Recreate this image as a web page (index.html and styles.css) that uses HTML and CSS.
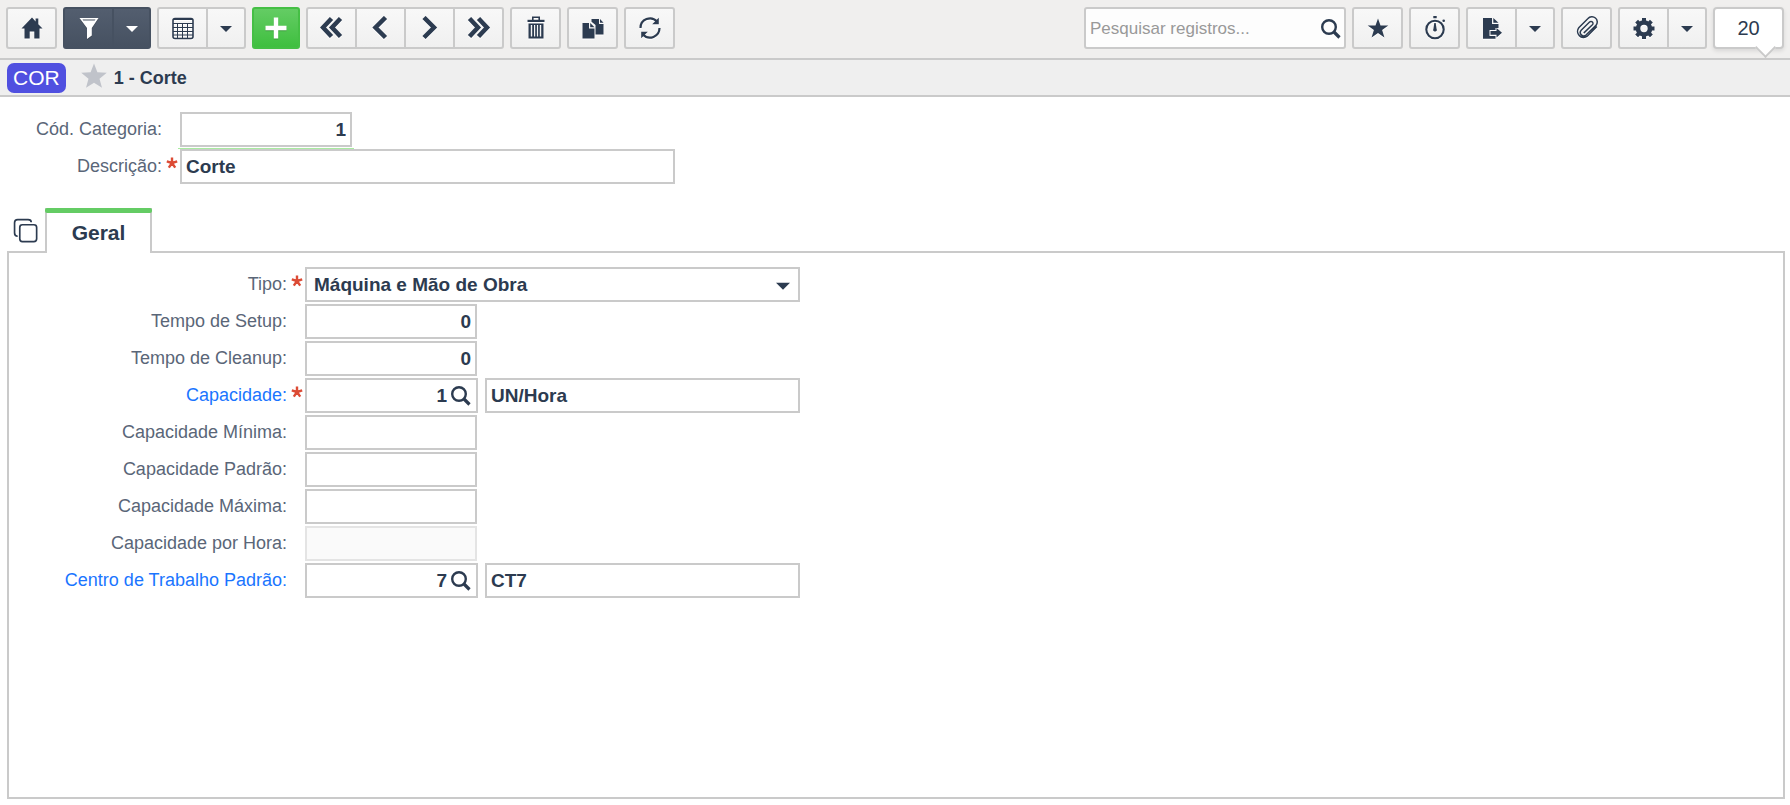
FILE: index.html
```
<!DOCTYPE html>
<html lang="pt-BR">
<head>
    <meta charset="UTF-8">
    <meta name="viewport" content="width=device-width, initial-scale=1.0">
    <title>1 - Corte</title>
    <link rel="stylesheet" href="styles.css">
</head>
<body>
    <!-- Shared icons -->
    <svg class="symbols" aria-hidden="true">
        <symbol id="caret" viewBox="0 0 12 12"><path d="M0 4H12L6 10Z"/></symbol>
        <symbol id="search" viewBox="0 0 20 20">
            <circle cx="8" cy="8" r="6.8" fill="none" stroke="currentColor" stroke-width="2.4"/>
            <path d="M12.5 12.5L18.5 18.5" stroke="currentColor" stroke-width="3.2"/>
        </symbol>
        <symbol id="asterisk" viewBox="0 0 12 12">
            <path d="M6 6V0.5M6 6L0.8 4.3M6 6L2.8 10.6M6 6L9.2 10.6M6 6L11.2 4.3" stroke="currentColor" stroke-width="2.4"/>
        </symbol>
    </svg>

    <header class="toolbar">
        <button class="btn" aria-label="Início">
            <svg class="icon" viewBox="0 0 24 24"><path d="M12 1.5L1.5 12.5H4.5V22.5H9.7V15.5H14.3V22.5H19.5V12.5H22.5L18.3 8.2V2.5H15.6V5.4Z"/></svg>
        </button>

        <div class="btn-group dark">
            <button class="btn" aria-label="Filtrar">
                <svg class="icon" viewBox="0 0 24 24"><path fill-rule="evenodd" d="M2.5 2H21.5L14.8 12V19.5L10 23V12ZM5.5 3.4L6.3 4.5H17.7L18.5 3.4Z"/></svg>
            </button>
            <button class="btn drop" aria-label="Opções de filtro"><svg class="caret"><use href="#caret"/></svg></button>
        </div>

        <div class="btn-group">
            <button class="btn" aria-label="Grade">
                <svg class="icon" viewBox="0 0 24 24">
                    <rect x="2" y="2.5" width="20" height="20" rx="2" fill="none" stroke="currentColor" stroke-width="1.6"/>
                    <path d="M2 3.5H22M2 7.5H22M2 11.5H22M2 15.5H22M2 19H22M6.5 7.5V22M11.5 7.5V22M16.5 7.5V22" stroke="currentColor" stroke-width="1"/>
                </svg>
            </button>
            <button class="btn drop" aria-label="Opções da grade"><svg class="caret"><use href="#caret"/></svg></button>
        </div>

        <button class="btn add" aria-label="Novo">
            <svg class="icon" viewBox="0 0 24 24"><path d="M9.8 1.5H14.2V9.8H22.5V14.2H14.2V22.5H9.8V14.2H1.5V9.8H9.8Z"/></svg>
        </button>

        <div class="btn-group">
            <button class="btn" aria-label="Primeiro">
                <svg class="icon stroke" viewBox="0 0 24 24"><path d="M11.5 2.5L3 11.5L11.5 20.5M20.5 2.5L12 11.5L20.5 20.5"/></svg>
            </button>
            <button class="btn" aria-label="Anterior">
                <svg class="icon stroke" viewBox="0 0 24 24"><path d="M16.5 1.5L6.5 11.5L16.5 21.5"/></svg>
            </button>
            <button class="btn" aria-label="Próximo">
                <svg class="icon stroke" viewBox="0 0 24 24"><path d="M6 1.5L16 11.5L6 21.5"/></svg>
            </button>
            <button class="btn" aria-label="Último">
                <svg class="icon stroke" viewBox="0 0 24 24"><path d="M2.5 2.5L11 11.5L2.5 20.5M11.5 2.5L20 11.5L11.5 20.5"/></svg>
            </button>
        </div>

        <button class="btn" aria-label="Excluir">
            <svg class="icon" viewBox="0 0 24 24">
                <path d="M8.8 4V1.2H15.2V4" fill="none" stroke="currentColor" stroke-width="1.6"/>
                <path d="M3.5 3.8H20.5V6H3.5Z"/>
                <path fill-rule="evenodd" d="M4.5 7.5H19.5V22.5H4.5ZM6.8 9V20.5H8.2V9ZM10 9V20.5H11.2V9ZM12.9 9V20.5H14.1V9ZM15.8 9V20.5H17.2V9Z"/>
            </svg>
        </button>

        <button class="btn" aria-label="Duplicar">
            <svg class="icon" viewBox="0 0 24 24">
                <path d="M10.5 3H18V8H22.5V18.5H14.5V9L10.5 5.8ZM19 3L22.5 6.8H19Z"/>
                <path d="M1.5 7H8V12.5H13.5V22.5H1.5ZM9.2 7L13.5 11.2H9.2Z"/>
            </svg>
        </button>

        <button class="btn" aria-label="Atualizar">
            <svg class="icon" viewBox="0 0 24 24">
                <path d="M2.5 12A9.5 9.5 0 0 1 19 5.5M21.5 12A9.5 9.5 0 0 1 5 18.5" fill="none" stroke="currentColor" stroke-width="2.2"/>
                <path d="M20.8 1.8V8.2H14.2ZM3.2 22.2V15.8H9.8Z"/>
            </svg>
        </button>

        <form class="search-box" role="search">
            <input type="text" placeholder="Pesquisar registros..." aria-label="Pesquisar registros">
            <button type="button" aria-label="Pesquisar"><svg class="lens"><use href="#search"/></svg></button>
        </form>

        <button class="btn" aria-label="Favoritos">
            <svg class="icon" viewBox="0 0 24 24"><path d="M12 2.5L14.5 9.6H22.3L16.1 14.1L18.4 21.5L12 17L5.6 21.5L7.9 14.1L1.7 9.6H9.5Z"/></svg>
        </button>

        <button class="btn" aria-label="Cronômetro">
            <svg class="icon" viewBox="0 0 24 24">
                <circle cx="12" cy="13.5" r="8.7" fill="none" stroke="currentColor" stroke-width="2.1"/>
                <path d="M10.3 0H13.7V2.2H10.3ZM11.3 7H12.7L13.6 13A1.6 1.6 0 0 1 12 15.5A1.6 1.6 0 0 1 10.4 13Z"/>
                <circle cx="20.7" cy="4.8" r="1.3"/>
            </svg>
        </button>

        <div class="btn-group">
            <button class="btn" aria-label="Exportar">
                <svg class="icon" viewBox="0 0 24 24">
                    <path d="M3 2H12V8H18.5V12H15.5V14H9.5V20H15.5V22.8H3ZM13.3 2L18.5 6.8H13.3Z"/>
                    <path d="M10.5 15H16.5V12L22 16.8L16.5 21.5V18.8H10.5Z"/>
                </svg>
            </button>
            <button class="btn drop" aria-label="Opções de exportação"><svg class="caret"><use href="#caret"/></svg></button>
        </div>

        <button class="btn" aria-label="Anexos">
            <svg class="icon" viewBox="0 0 24 24">
                <path d="M21.4 11L12.2 20.2A6 6 0 0 1 3.8 11.8L13 2.6A5.2 5.2 0 0 1 21 9.4L11 19A3.4 3.4 0 0 1 6.2 14.2L14.6 6A1.8 1.8 0 0 1 17.4 8.8L9.2 16.6" fill="none" stroke="currentColor" stroke-width="1.5" stroke-linecap="round"/>
            </svg>
        </button>

        <div class="btn-group">
            <button class="btn" aria-label="Configurações">
                <svg class="icon" viewBox="0 0 24 24">
                    <circle cx="12" cy="12.5" r="6" fill="none" stroke="currentColor" stroke-width="4.6"/>
                    <path d="M12 6.5V2M12 18.5V23M6 12.5H1.5M18 12.5H22.5M7.8 8.3L4.6 5.1M16.2 8.3L19.4 5.1M7.8 16.7L4.6 19.9M16.2 16.7L19.4 19.9" stroke="currentColor" stroke-width="4"/>
                </svg>
            </button>
            <button class="btn drop" aria-label="Opções de configuração"><svg class="caret"><use href="#caret"/></svg></button>
        </div>

        <button class="counter">20</button>
    </header>

    <div class="title-bar">
        <span class="badge">COR</span>
        <button class="favorite" aria-label="Marcar como favorito">
            <svg viewBox="0 0 26 26"><path d="M13 0.5L16.4 9.3L25.8 9.8L18.5 15.7L21 24.8L13 19.7L5 24.8L7.5 15.7L0.2 9.8L9.6 9.3Z"/></svg>
        </button>
        <h1>1 - Corte</h1>
    </div>

    <main>
        <div class="form record">
            <div class="row">
                <label for="codigo">Cód. Categoria:</label>
                <span class="mark"></span>
                <div class="focused"><input id="codigo" class="field number" type="text" value="1"></div>
            </div>
            <div class="row">
                <label for="descricao">Descrição:</label>
                <span class="mark"><svg><use href="#asterisk"/></svg></span>
                <input id="descricao" class="field wide" type="text" value="Corte" required>
            </div>
        </div>

        <div class="tabs">
            <button class="tab-list" aria-label="Abas">
                <svg viewBox="0 0 24 24"><path d="M4.5 17.5C2.5 17.5 1.5 16.5 1.5 14.5V4.5C1.5 2.5 2.5 1.5 4.5 1.5H14.5C16.5 1.5 17.5 2.5 17.5 4M9 6.5H20C21.7 6.5 22.7 7.5 22.7 9V20C22.7 21.7 21.7 22.7 20 22.7H9C7.5 22.7 6.5 21.7 6.5 20V9C6.5 7.5 7.5 6.5 9 6.5Z"/></svg>
            </button>
            <button class="tab">Geral</button>
        </div>

        <section class="panel">
            <div class="form">
                <div class="row">
                    <label for="tipo">Tipo:</label>
                    <span class="mark"><svg><use href="#asterisk"/></svg></span>
                    <div class="select wide">
                        <select id="tipo" class="field">
                            <option>Máquina e Mão de Obra</option>
                        </select>
                        <svg class="caret"><use href="#caret"/></svg>
                    </div>
                </div>
                <div class="row">
                    <label for="setup">Tempo de Setup:</label>
                    <span class="mark"></span>
                    <input id="setup" class="field number" type="text" value="0">
                </div>
                <div class="row">
                    <label for="cleanup">Tempo de Cleanup:</label>
                    <span class="mark"></span>
                    <input id="cleanup" class="field number" type="text" value="0">
                </div>
                <div class="row">
                    <label for="capacidade"><a href="#">Capacidade:</a></label>
                    <span class="mark"><svg><use href="#asterisk"/></svg></span>
                    <div class="lookup">
                        <input id="capacidade" type="text" value="1">
                        <button aria-label="Pesquisar capacidade"><svg class="lens"><use href="#search"/></svg></button>
                    </div>
                    <input class="field unit" type="text" value="UN/Hora" aria-label="Unidade da capacidade">
                </div>
                <div class="row">
                    <label for="minima">Capacidade Mínima:</label>
                    <span class="mark"></span>
                    <input id="minima" class="field number" type="text">
                </div>
                <div class="row">
                    <label for="padrao">Capacidade Padrão:</label>
                    <span class="mark"></span>
                    <input id="padrao" class="field number" type="text">
                </div>
                <div class="row">
                    <label for="maxima">Capacidade Máxima:</label>
                    <span class="mark"></span>
                    <input id="maxima" class="field number" type="text">
                </div>
                <div class="row">
                    <label for="hora">Capacidade por Hora:</label>
                    <span class="mark"></span>
                    <input id="hora" class="field number" type="text" disabled>
                </div>
                <div class="row">
                    <label for="centro"><a href="#">Centro de Trabalho Padrão:</a></label>
                    <span class="mark"></span>
                    <div class="lookup">
                        <input id="centro" type="text" value="7">
                        <button aria-label="Pesquisar centro de trabalho"><svg class="lens"><use href="#search"/></svg></button>
                    </div>
                    <input class="field unit" type="text" value="CT7" aria-label="Nome do centro de trabalho">
                </div>
            </div>
        </section>
    </main>
</body>
</html>
```
FILE: styles.css
```
* {
    box-sizing: border-box;
}

body {
    margin: 0;
    min-height: 100vh;
    display: flex;
    flex-direction: column;
    font-family: "Liberation Sans", Arial, sans-serif;
    font-size: 18px;
    color: #2c3b50;
    background: #fff;
}

button,
input,
select {
    font-family: inherit;
    color: inherit;
    margin: 0;
}

button {
    cursor: pointer;
    padding: 0;
    border: none;
    background: none;
}

svg {
    display: block;
    fill: currentColor;
}

.symbols {
    position: absolute;
    width: 0;
    height: 0;
}

/* Toolbar */
.toolbar {
    display: flex;
    gap: 6px;
    padding: 7px 6px 9px;
    background: #f0efee;
    border-bottom: 2px solid #cacaca;
}

.btn {
    display: flex;
    align-items: center;
    justify-content: center;
    width: 51px;
    height: 42px;
    border: 2px solid #cacaca;
    border-radius: 3px;
    background: linear-gradient(#f8f8f8, #f0f0f0);
}

.btn.drop {
    width: 40px;
}

.btn-group {
    display: flex;
}

.btn-group .btn + .btn {
    margin-left: -2px;
    border-top-left-radius: 0;
    border-bottom-left-radius: 0;
}

.btn-group .btn:not(:last-child) {
    border-top-right-radius: 0;
    border-bottom-right-radius: 0;
}

.dark .btn {
    color: #fff;
    border-color: #465161;
    background: linear-gradient(#535e6f, #465161);
}

.dark .btn.drop {
    width: 39px;
}

.btn.add {
    width: 48px;
    color: #fff;
    border-color: #45bf45;
    background: linear-gradient(#64cc64, #3fbf3f);
}

.icon {
    width: 24px;
    height: 24px;
    filter: drop-shadow(0 1px 0 #fff);
}

.icon.stroke {
    fill: none;
    stroke: currentColor;
    stroke-width: 4.5;
}

.dark .icon,
.add .icon {
    filter: drop-shadow(0 1px 0 rgba(0, 0, 0, 0.2));
}

.caret {
    width: 12px;
    height: 12px;
}

.lens {
    width: 20px;
    height: 20px;
}

.search-box {
    display: flex;
    align-items: center;
    width: 262px;
    height: 42px;
    margin-left: auto;
    padding: 2px 3px 0 4px;
    border: 2px solid #cacaca;
    border-radius: 3px;
    background: #fdfdfd;
}

.search-box input {
    flex: 1;
    min-width: 0;
    padding: 0;
    border: none;
    outline: none;
    font-size: 17px;
    background: none;
}

.search-box input::placeholder {
    color: #999;
}

.counter {
    position: relative;
    width: 71px;
    height: 42px;
    font-size: 20px;
    border: 2px solid #cacaca;
    border-radius: 4px;
    background: #fff;
    box-shadow: 0 2px 4px rgba(0, 0, 0, 0.1);
}

/* Balloon tail under the counter */
.counter::after {
    content: "";
    position: absolute;
    right: 9px;
    bottom: -8px;
    width: 13px;
    height: 13px;
    border: solid #cacaca;
    border-width: 0 2px 2px 0;
    background: #fff;
    transform: rotate(45deg);
}

/* Title bar */
.title-bar {
    display: flex;
    align-items: center;
    height: 37px;
    padding: 0 7px;
    background: #efefef;
    border-bottom: 2px solid #cacaca;
}

.badge {
    padding: 0 6px;
    font-size: 21px;
    line-height: 30px;
    color: #fff;
    background: #5050e0;
    border-radius: 7px;
}

.favorite {
    margin: 0 7px 4px 15px;
    color: #c0c3ca;
}

.favorite svg {
    width: 26px;
    height: 26px;
}

.title-bar h1 {
    margin: 0;
    padding-top: 2px;
    font-size: 18px;
}

/* Forms */
main {
    flex: 1;
    display: flex;
    flex-direction: column;
    padding: 15px 5px 6px 7px;
}

.form {
    display: flex;
    flex-direction: column;
    gap: 2px;
}

.row {
    display: flex;
    align-items: center;
}

.row label {
    width: 278px;
    text-align: right;
    color: #5a6678;
}

.record label {
    width: 155px;
}

.row a {
    color: #1a75ff;
    text-decoration: none;
}

.mark {
    width: 18px;
    padding: 0 0 8px 4px;
    color: #dc4b35;
}

.mark svg {
    width: 12px;
    height: 12px;
}

.field,
.lookup {
    height: 35px;
    border: 2px solid #cacaca;
    border-radius: 0;
    background: #fff;
}

.field {
    padding: 0 4px;
    font-size: 19px;
    font-weight: bold;
}

.number {
    width: 172px;
    text-align: right;
}

.field:disabled {
    border-color: #e4e4e4;
    background: #fafafa;
}

.wide {
    width: 495px;
}

.unit {
    width: 315px;
    margin-left: 7px;
}

.focused {
    position: relative;
    display: flex;
}

.focused::after {
    content: "";
    position: absolute;
    left: -2px;
    right: -2px;
    bottom: -2px;
    height: 1px;
    background: #a8eba0;
}

.lookup {
    display: flex;
    align-items: center;
    width: 173px;
    padding-right: 5px;
}

.lookup input {
    flex: 1;
    min-width: 0;
    padding: 0 4px;
    border: none;
    outline: none;
    font-size: 19px;
    font-weight: bold;
    text-align: right;
}

.select {
    position: relative;
}

.select .field {
    width: 100%;
    padding: 0 7px;
    appearance: none;
}

.select .caret {
    position: absolute;
    right: 10px;
    top: 11px;
    width: 14px;
    height: 14px;
    pointer-events: none;
}

/* Tabs */
.tabs {
    display: flex;
    margin-top: 24px;
}

.tab-list {
    margin: 2px 7px 0 6px;
}

.tab-list svg {
    width: 25px;
    height: 25px;
    fill: none;
    stroke: currentColor;
    stroke-width: 1.6;
}

.tab {
    position: relative;
    z-index: 1;
    width: 107px;
    height: 45px;
    margin-bottom: -2px;
    padding-top: 5px;
    border: solid #cacaca;
    border-width: 0 2px;
    font-size: 21px;
    font-weight: bold;
    background: #fff;
}

.tab::before {
    content: "";
    position: absolute;
    left: -2px;
    right: -2px;
    top: 0;
    height: 5px;
    border-radius: 2px;
    background: #64cc64;
}

.panel {
    flex: 1;
    padding: 14px 0;
    border: 2px solid #cacaca;
}
```
